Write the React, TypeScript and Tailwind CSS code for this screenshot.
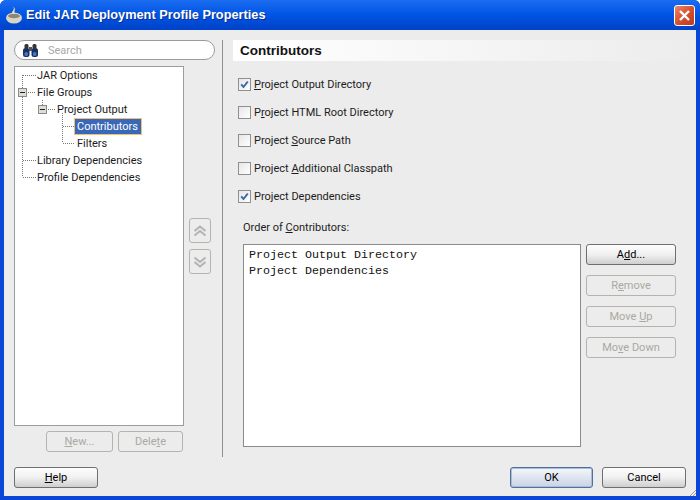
const font = { fontFamily: 'Roboto, "Liberation Sans", sans-serif' };

const treeRows = [
  { label: "JAR Options", indent: "pl-[22px]" },
  { label: "File Groups", indent: "pl-[22px]" },
  { label: "Project Output", indent: "pl-[42px]" },
  { label: "Contributors", indent: "pl-[60px]", selected: true },
  { label: "Filters", indent: "pl-[62px]" },
  { label: "Library Dependencies", indent: "pl-[22px]" },
  { label: "Profile Dependencies", indent: "pl-[22px]" },
];

const Btn = ({
  children,
  className = "",
  disabled = false,
  def = false,
}: {
  children: React.ReactNode;
  className?: string;
  disabled?: boolean;
  def?: boolean;
}) => (
  <div
    className={`h-[21px] rounded-[3px] border flex items-center justify-center text-[11px] ${
      disabled
        ? "border-[#b4b4ac] text-[#a9a9a2]"
        : def
          ? "border-[#4f6f9c] text-black bg-gradient-to-b from-[#f4f6fb] to-[#c9d3e4] shadow-[inset_0_0_0_1px_#a9bcd8]"
          : "border-[#6f6f6f] text-black bg-gradient-to-b from-[#fdfdfd] via-[#f0f0f0] to-[#cfcfcf]"
    } ${className}`}
  >
    <span className="pt-[2px]">{children}</span>
  </div>
);

const Check = ({ on, label }: { on?: boolean; label: React.ReactNode }) => (
  <div className="h-[28px] flex items-center gap-[3px] text-[11px] text-[#1c1c1c]">
    <div className="w-[13px] h-[13px] border border-[#8e8f8f] bg-gradient-to-br from-[#e6e6e6] to-white flex items-center justify-center">
      {on && (
        <svg width="9" height="9" viewBox="0 0 9 9">
          <path d="M1.2 4.4 L3.5 7 L7.8 1.5" fill="none" stroke="#3f6ba8" strokeWidth="2" />
        </svg>
      )}
    </div>
    <span className="pt-[2px]">{label}</span>
  </div>
);

const Expander = ({ x, y }: { x: number; y: number }) => (
  <g>
    <rect x={x + 0.5} y={y + 0.5} width="8" height="8" fill="#dcdcd8" stroke="#8a8a86" />
    <path d={`M${x + 2} ${y + 4.5} H${x + 7}`} stroke="#222" />
  </g>
);

const Chevrons = ({ up }: { up?: boolean }) => (
  <svg width="14" height="12" viewBox="0 0 14 12" fill="none" stroke="#b0b4b0" strokeWidth="2">
    {up ? (
      <path d="M1.5 6 L7 1.5 L12.5 6 M1.5 10.5 L7 6 L12.5 10.5" />
    ) : (
      <path d="M1.5 1.5 L7 6 L12.5 1.5 M1.5 6 L7 10.5 L12.5 6" />
    )}
  </svg>
);

export default function App() {
  return (
    <div
      className="w-[700px] h-[500px] overflow-hidden relative flex flex-col bg-[#0a46d8] rounded-t-[6px]"
      style={font}
    >
      {/* title bar */}
      <div className="h-[30px] shrink-0 flex items-center pl-[5px] pr-[5px] bg-gradient-to-b from-[#1a6cf0] via-[#0054e3] to-[#0042c8]">
        <svg width="18" height="20" viewBox="0 0 18 20">
          <ellipse cx="9" cy="13" rx="8" ry="5.5" fill="#d9d4c4" />
          <ellipse cx="9" cy="11" rx="6" ry="2.2" fill="#8d8676" />
          <path d="M8 9 C5 6.5 11 5.5 8 1.5 C12 4.5 8 6.5 10 9 Z" fill="#f2e6b8" />
        </svg>
        <span
          className="ml-[3px] text-white font-bold text-[12.75px] [text-shadow:1px_1px_0_#0b2f90]"
          style={{ fontFamily: '"Liberation Sans", sans-serif' }}
        >
          Edit JAR Deployment Profile Properties
        </span>
        <div className="ml-auto w-[21px] h-[21px] rounded-[3px] border border-white bg-gradient-to-br from-[#e8866a] via-[#d8502f] to-[#b83a1c] flex items-center justify-center">
          <svg width="13" height="13" viewBox="0 0 13 13">
            <path d="M2 2 L11 11 M11 2 L2 11" stroke="#fff" strokeWidth="2.4" />
          </svg>
        </div>
      </div>

      {/* client area */}
      <div className="flex-1 mx-[4px] mb-[4px] bg-[#ececec] flex flex-col text-[11px] text-[#1c1c1c]">
        <div className="flex pt-[10px] pl-[10px] h-[427px]">
          {/* left column */}
          <div className="w-[201px] shrink-0 flex flex-col">
            <div className="h-[20px] rounded-[10px] border border-[#9b9b9b] bg-white flex items-center pl-[7px] gap-[9px]">
              <svg width="17" height="15" viewBox="0 0 17 15">
                <rect x="1" y="5" width="6.5" height="9" rx="2.5" fill="#1c2f5c" />
                <rect x="9.5" y="5" width="6.5" height="9" rx="2.5" fill="#1c2f5c" />
                <rect x="2.5" y="1" width="4" height="5" rx="1.5" fill="#30343c" />
                <rect x="10.5" y="1" width="4" height="5" rx="1.5" fill="#30343c" />
                <rect x="7" y="4" width="3" height="4" fill="#50545c" />
                <rect x="2.5" y="9" width="3.5" height="4" rx="1.5" fill="#3f78c8" />
                <rect x="11" y="9" width="3.5" height="4" rx="1.5" fill="#3f78c8" />
              </svg>
              <span className="pt-[2px] text-[#a8a8a8]">Search</span>
            </div>
            <div className="flex flex-1 mt-[6px]">
              <div className="w-[170px] shrink-0 flex flex-col">
                <div className="relative h-[360px] border border-[#9c9c9c] bg-white">
                  <svg className="absolute left-0 top-0" width="100" height="120" fill="none">
                    <g stroke="#777" strokeDasharray="1 1">
                      <path d="M7.5 8 V110 M8 8.5 H21 M13 25.5 H21 M8 93.5 H21 M8 110.5 H21" />
                      <path d="M27.5 33 V38 M33 42.5 H41" />
                      <path d="M47.5 46 V76 M48 59.5 H60 M48 76.5 H60" />
                    </g>
                    <Expander x={3} y={21} />
                    <Expander x={23} y={38} />
                  </svg>
                  {treeRows.map((r) => (
                    <div key={r.label} className={`relative h-[17px] flex items-center ${r.indent}`}>
                      {r.selected ? (
                        <span className="h-[15px] w-[66px] px-[2px] pt-[2px] flex items-center bg-[#3a68b8] text-white outline outline-1 outline-[#f0c070]">
                          {r.label}
                        </span>
                      ) : (
                        <span className="pt-[2px]">{r.label}</span>
                      )}
                    </div>
                  ))}
                </div>
                <div className="flex justify-end gap-[5px] mt-[5px] pr-px">
                  <Btn disabled className="w-[67px]">
                    <u>N</u>ew...
                  </Btn>
                  <Btn disabled className="w-[65px]">
                    Dele<u>t</u>e
                  </Btn>
                </div>
              </div>
              <div className="ml-[5px] w-[22px] pt-[152px] flex flex-col gap-[6px]">
                <div className="h-[25px] rounded-[3px] border border-[#b4b4ac] flex items-center justify-center">
                  <Chevrons up />
                </div>
                <div className="h-[25px] rounded-[3px] border border-[#b4b4ac] flex items-center justify-center">
                  <Chevrons />
                </div>
              </div>
            </div>
          </div>

          {/* separator */}
          <div className="ml-[7px] w-[2px] border-l border-[#8f8f8f] bg-[#ececec] h-[417px]" />

          {/* right column */}
          <div className="ml-[9px] flex-1 flex flex-col">
            <div className="h-[21px] w-[463px] pl-[7px] pt-px flex items-center font-bold text-[13.5px] text-[#111] bg-gradient-to-r from-white to-[#ececec]" style={{ fontFamily: '"Liberation Sans", sans-serif' }}>
              Contributors
            </div>
            <div className="mt-[9px] pl-[5px]">
              <Check on label={<><u>P</u>roject Output Directory</>} />
              <Check label={<>P<u>r</u>oject HTML Root Directory</>} />
              <Check label={<>Project <u>S</u>ource Path</>} />
              <Check label={<>Project <u>A</u>dditional Classpath</>} />
              <Check on label={<>Pro<u>j</u>ect Dependencies</>} />
            </div>
            <div className="mt-[10px] pl-[10px]">
              Order of <u>C</u>ontributors:
            </div>
            <div className="mt-[7px] pl-[10px] flex gap-[5px]">
              <div
                className="w-[338px] h-[203px] border border-[#8b8b8b] bg-white pl-[5px] pt-[2px] text-[11.67px] leading-[16px] text-[#111]"
                style={{ fontFamily: '"Liberation Mono", monospace' }}
              >
                <div>Project Output Directory</div>
                <div>Project Dependencies</div>
              </div>
              <div className="w-[90px] flex flex-col gap-[10px]">
                <Btn>
                  A<u>d</u>d...
                </Btn>
                <Btn disabled>
                  R<u>e</u>move
                </Btn>
                <Btn disabled>
                  Move <u>U</u>p
                </Btn>
                <Btn disabled>
                  Mo<u>v</u>e Down
                </Btn>
              </div>
            </div>
          </div>
        </div>

        {/* footer */}
        <div className="flex items-start pt-[10px] pl-[10px] pr-[10px]">
          <Btn className="w-[84px]">
            <u>H</u>elp
          </Btn>
          <Btn def className="w-[83px] ml-auto">
            OK
          </Btn>
          <Btn className="w-[84px] ml-[9px]">Cancel</Btn>
        </div>
      </div>

      <svg className="absolute right-[3px] bottom-[3px]" width="9" height="9" viewBox="0 0 9 9" stroke="#a0a09a">
        <path d="M8 2 L2 8 M8 5 L5 8" />
      </svg>
    </div>
  );
}
